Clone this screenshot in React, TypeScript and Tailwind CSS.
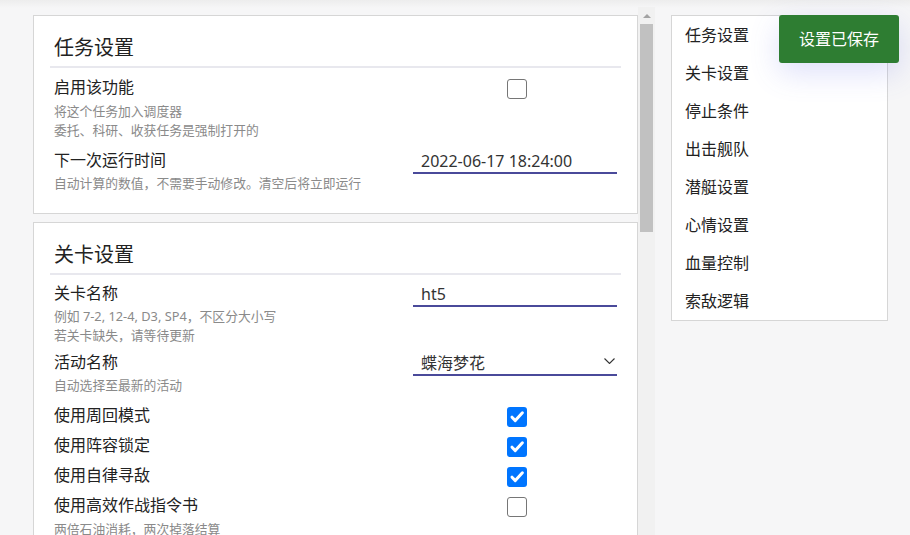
import { ReactNode } from 'react';

const navItems = ['任务设置', '关卡设置', '停止条件', '出击舰队', '潜艇设置', '心情设置', '血量控制', '索敌逻辑'];

function Checkbox({ checked }: { checked?: boolean }) {
  return checked ? (
    <span className="mt-1 flex h-5 w-5 items-center justify-center rounded-[3px] bg-[#0075ff]">
      <svg viewBox="0 0 20 20" className="h-5 w-5">
        <path d="M5 10.2l3.3 3.4L15.4 5.8" fill="none" stroke="#fff" strokeWidth="3" strokeLinecap="round" strokeLinejoin="round" />
      </svg>
    </span>
  ) : (
    <span className="mt-1 block h-5 w-5 rounded-[3px] border-[1.5px] border-[#767676] bg-white" />
  );
}

function Desc({ lines }: { lines: string[] }) {
  return (
    <div className="text-[12.8px] leading-[19px] text-[#8a8a8a]">
      {lines.map(l => (
        <div key={l}>{l}</div>
      ))}
    </div>
  );
}

function Row({ label, children, tall }: { label: string; children: ReactNode; tall?: boolean }) {
  return (
    <div className={`flex items-center justify-between ${tall ? 'h-[30px]' : 'h-[28px]'}`}>
      <span className="text-[16px] leading-[22px] text-[#222]">{label}</span>
      <div className="w-[204px]">{children}</div>
    </div>
  );
}

function CheckCell({ checked }: { checked?: boolean }) {
  return (
    <div className="flex pl-[94px]">
      <Checkbox checked={checked} />
    </div>
  );
}

function TextInput({ value, select }: { value: string; select?: boolean }) {
  return (
    <div className="flex h-[28px] items-center justify-between border-b-2 border-[#4a4a9a] pl-2 pr-[2px] pt-[3px] text-[16px] text-[#333]">
      <span>{value}</span>
      {select && (
        <svg width="11" height="6" viewBox="0 0 11 6" className="mb-[3px]">
          <path d="M0.5 0.5l5 5 5-5" fill="none" stroke="#333" strokeWidth="1.1" />
        </svg>
      )}
    </div>
  );
}

function Card({ title, children }: { title: string; children: ReactNode }) {
  return (
    <div className="shrink-0 border border-[#d6d6d6] bg-white px-5 pb-5 pt-[18px]">
      <h2 className="text-[20px] leading-[28px] text-[#222]">{title}</h2>
      <div className="-mx-1 mt-1 h-[2px] bg-[#e8e8ee]" />
      {children}
    </div>
  );
}

export default function App() {
  return (
    <div className="relative flex h-[535px] w-[910px] overflow-hidden bg-[linear-gradient(to_bottom,#ededed,#f6f6f7_8px)] font-['Noto_Sans','Noto_Sans_CJK_SC',sans-serif]">
      {/* Left: scrolling settings */}
      <div className="flex pt-[7px]">
        <div className="flex h-[528px] w-[638px] flex-col gap-2 overflow-hidden pl-[33px] pt-2">
          <Card title="任务设置">
            <div className="mt-1">
              <Row label="启用该功能" tall>
                <CheckCell />
              </Row>
              <Desc lines={['将这个任务加入调度器', '委托、科研、收获任务是强制打开的']} />
            </div>
            <div className="mt-[6px]">
              <Row label="下一次运行时间">
                <TextInput value="2022-06-17 18:24:00" />
              </Row>
              <Desc lines={['自动计算的数值，不需要手动修改。清空后将立即运行']} />
            </div>
          </Card>

          <Card title="关卡设置">
            <div className="mt-1">
              <Row label="关卡名称">
                <TextInput value="ht5" />
              </Row>
              <Desc lines={['例如 7-2, 12-4, D3, SP4，不区分大小写', '若关卡缺失，请等待更新']} />
            </div>
            <div className="mt-[3px]">
              <Row label="活动名称">
                <TextInput value="蝶海梦花" select />
              </Row>
              <Desc lines={['自动选择至最新的活动']} />
            </div>
            <div className="mt-[5px]">
              <Row label="使用周回模式" tall>
                <CheckCell checked />
              </Row>
              <Row label="使用阵容锁定" tall>
                <CheckCell checked />
              </Row>
              <Row label="使用自律寻敌" tall>
                <CheckCell checked />
              </Row>
              <Row label="使用高效作战指令书" tall>
                <CheckCell />
              </Row>
              <Desc lines={['两倍石油消耗，两次掉落结算']} />
            </div>
          </Card>
        </div>

        {/* Scrollbar */}
        <div className="flex h-[528px] w-[17px] flex-col items-center bg-[#f1f1f1]">
          <div className="flex h-[17px] items-center justify-center">
            <svg width="8" height="4" viewBox="0 0 8 4">
              <path d="M0 4L4 0l4 4z" fill="#a3a3a3" />
            </svg>
          </div>
          <div className="h-[208px] w-[13px] bg-[#c1c1c1]" />
        </div>
      </div>

      {/* Right: navigation */}
      <div className="ml-4 pt-[15px]">
        <nav className="w-[217px] border border-[#d6d6d6] bg-white">
          {navItems.map(item => (
            <div key={item} className="h-[38px] pl-[13px] text-[16px] leading-[38px] text-[#222]">
              {item}
            </div>
          ))}
        </nav>
      </div>

      {/* Toast */}
      <div className="absolute right-[11px] top-[15px] flex h-[48px] w-[120px] items-center justify-center rounded-[3px] bg-[#2e7d32] text-[16px] text-white shadow-[0_10px_30px_rgba(90,100,230,0.2)]">
        设置已保存
      </div>
    </div>
  );
}
